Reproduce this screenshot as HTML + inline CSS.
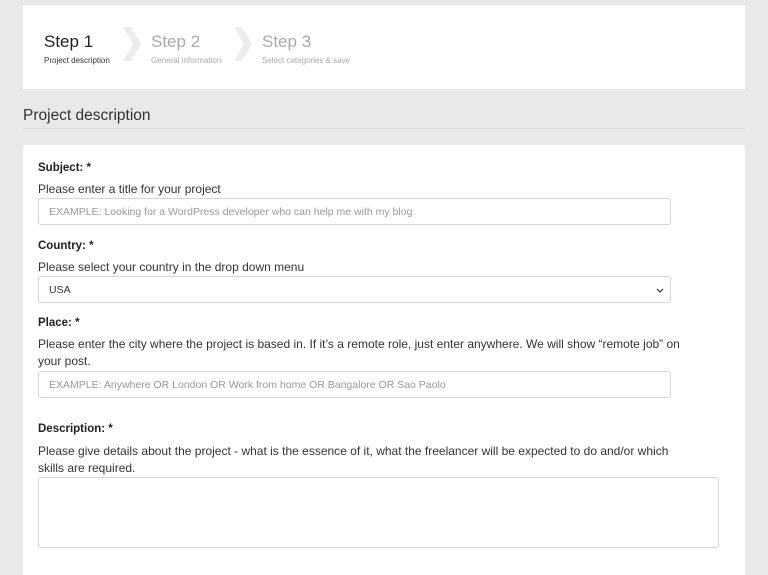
<!DOCTYPE html>
<html><head><style>
*{margin:0;padding:0;box-sizing:border-box}
body{width:768px;height:564px;background:#e9e9e9;font-family:"Liberation Sans",sans-serif;position:relative;overflow:hidden;color:#333}
.a{position:absolute;white-space:nowrap}
.card{position:absolute;background:#fff}
.lbl{font-weight:bold;font-size:11.5px;color:#222}
.help{font-size:12px;color:#333;line-height:17px}
.inp{position:absolute;border:1px solid #d4d4d4;border-radius:3px;background:#fff;font-size:10.5px;color:#999;padding-left:10px;display:flex;align-items:center}
.st{font-size:17px;color:#aaa}
.ss{font-size:8px;color:#aaa}
</style></head><body>
<div class="card" style="left:23px;top:5px;width:722px;height:84px"></div>
<div class="a st" style="left:44px;top:32px;color:#222">Step 1</div>
<div class="a ss" style="left:44px;top:56px;color:#333">Project description</div>
<svg class="a" style="left:121px;top:27px" width="22" height="34"><polygon points="2,0 10,0 20,17 10,34 2,34 12,17" fill="#ececec"/></svg>
<div class="a st" style="left:151px;top:32px">Step 2</div>
<div class="a ss" style="left:151px;top:56px">General information</div>
<svg class="a" style="left:232px;top:27px" width="22" height="34"><polygon points="2,0 10,0 20,17 10,34 2,34 12,17" fill="#ececec"/></svg>
<div class="a st" style="left:262px;top:32px">Step 3</div>
<div class="a ss" style="left:262px;top:56px">Select categories &amp; save</div>

<div class="a" style="left:23px;top:107px;font-size:15.5px;color:#333">Project description</div>
<div class="a" style="left:23px;top:128px;width:722px;height:1px;background:#dedede"></div>

<div class="card" style="left:23px;top:145px;width:722px;height:430px"></div>
<div class="a lbl" style="left:38px;top:162px">Subject: *</div>
<div class="a help" style="left:38px;top:181px">Please enter a title for your project</div>
<div class="inp" style="left:38px;top:198px;width:633px;height:27px">EXAMPLE: Looking for a WordPress developer who can help me with my blog</div>
<div class="a lbl" style="left:38px;top:240px">Country: *</div>
<div class="a help" style="left:38px;top:259px">Please select your country in the drop down menu</div>
<div class="inp" style="left:38px;top:276px;width:633px;height:27px;color:#333">USA<svg style="position:absolute;right:6px;top:11px" width="8" height="5"><path d="M1 1l3 3 3-3" stroke="#444" stroke-width="1.3" fill="none"/></svg></div>
<div class="a lbl" style="left:38px;top:317px">Place: *</div>
<div class="a help" style="left:38px;top:336px">Please enter the city where the project is based in. If it’s a remote role, just enter anywhere. We will show “remote job” on<br>your post.</div>
<div class="inp" style="left:38px;top:371px;width:633px;height:27px">EXAMPLE: Anywhere OR London OR Work from home OR Bangalore OR Sao Paolo</div>
<div class="a lbl" style="left:38px;top:423px">Description: *</div>
<div class="a help" style="left:38px;top:443px">Please give details about the project - what is the essence of it, what the freelancer will be expected to do and/or which<br>skills are required.</div>
<div class="inp" style="left:38px;top:477px;width:681px;height:71px"></div>
</body></html>
